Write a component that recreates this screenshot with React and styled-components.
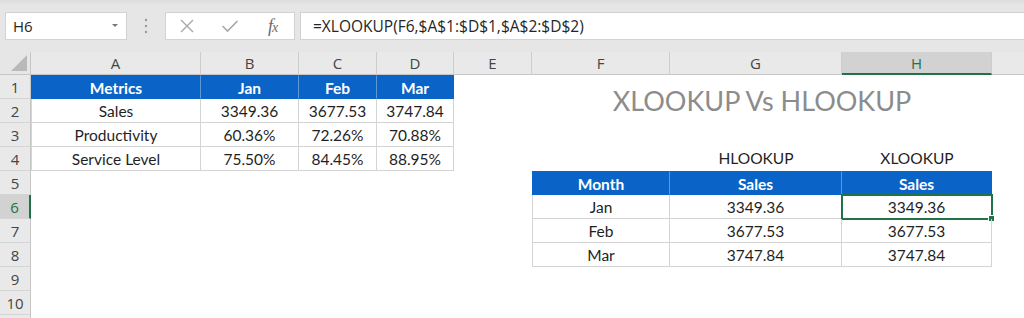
import React from "react";
import styled, { createGlobalStyle, css } from "styled-components";

const GlobalStyle = createGlobalStyle`
    html, body {
        margin: 0;
        padding: 0;
        background: #ffffff;
        overflow: hidden;
    }
`;

// widths in px, "label: false" for headers that run off the right edge
const COLS = [
    { key: "A", w: 170 },
    { key: "B", w: 98 },
    { key: "C", w: 78 },
    { key: "D", w: 77 },
    { key: "E", w: 78 },
    { key: "F", w: 138 },
    { key: "G", w: 172 },
    { key: "H", w: 150 },
    { key: "I", w: 100, label: false },
];
const ROWS = [1, 2, 3, 4, 5, 6, 7, 8, 9, 10, 11];
const LAST_VISIBLE_ROW = 10;

const ACTIVE_COL = "H";
const ACTIVE_ROW = 6;

// tables on the sheet, first row is the blue header
const TABLES = [
    {
        cols: ["A", "B", "C", "D"],
        firstRow: 1,
        rows: [
            ["Metrics", "Jan", "Feb", "Mar"],
            ["Sales", "3349.36", "3677.53", "3747.84"],
            ["Productivity", "60.36%", "72.26%", "70.88%"],
            ["Service Level", "75.50%", "84.45%", "88.95%"],
        ],
    },
    {
        cols: ["F", "G", "H"],
        firstRow: 5,
        rows: [
            ["Month", "Sales", "Sales"],
            ["Jan", "3349.36", "3349.36"],
            ["Feb", "3677.53", "3677.53"],
            ["Mar", "3747.84", "3747.84"],
        ],
    },
];

const LABELS = [
    { col: "G", row: 4, text: "HLOOKUP" },
    { col: "H", row: 4, text: "XLOOKUP" },
];

const colLine = (letter) => letter.charCodeAt(0) - 65 + 2;
const rowLine = (n) => n + 1;

const Window = styled.div`
    width: 1024px;
    height: 318px;
    overflow: hidden;
    background: #e6e6e6;
`;

/* ---------- formula bar ---------- */

const TopBar = styled.div`
    height: 52px;
    box-sizing: border-box;
    padding: 12px 0 12px 5px;
    display: flex;
    align-items: stretch;
    background: linear-gradient(#dcdcdc 0px, #e6e6e6 5px, #e6e6e6 100%);
    font-family: "Open Sans", "DejaVu Sans", sans-serif;
`;

const NameBox = styled.div`
    width: 122px;
    box-sizing: border-box;
    background: #fff;
    border: 1px solid #d2d2d2;
    display: flex;
    align-items: center;
    justify-content: space-between;
    padding: 0 8px 0 7px;
    font-size: 15px;
    color: #262626;
`;

const Caret = styled.span`
    width: 0;
    height: 0;
    border-left: 3px solid transparent;
    border-right: 3px solid transparent;
    border-top: 3px solid #777;
    margin-bottom: 2px;
`;

const Grip = styled.div`
    width: 38px;
    display: flex;
    align-items: center;
    justify-content: center;
`;

const FxBox = styled.div`
    width: 130px;
    box-sizing: border-box;
    background: #fff;
    border: 1px solid #d2d2d2;
    display: flex;
    align-items: center;
`;

const FxSlot = styled.div`
    width: 43px;
    display: flex;
    align-items: center;
    justify-content: center;
    color: #a6a6a6;
`;

const FxText = styled.span`
    font-family: "Liberation Serif", "DejaVu Serif", serif;
    font-style: italic;
    font-size: 18px;
    color: #6b6b6b;
    letter-spacing: -1px;
    & small {
        font-size: 14px;
    }
`;

const FormulaInput = styled.div`
    flex: 1;
    margin-left: 5px;
    background: #fff;
    border: 1px solid #d2d2d2;
    border-right: none;
    display: flex;
    align-items: center;
    padding-left: 12px;
    font-size: 15.5px;
    color: #262626;
    white-space: nowrap;
`;

/* ---------- sheet grid ---------- */

const Sheet = styled.div`
    display: grid;
    grid-template-columns: 31px ${COLS.map((c) => c.w + "px").join(" ")};
    grid-template-rows: 23px repeat(${ROWS.length}, 24px);
    background: #ffffff;
    font-family: "Lato", "Open Sans", sans-serif;
    font-size: 15.5px;
`;

const Corner = styled.div`
    grid-column: 1;
    grid-row: 1;
    background: #e6e6e6;
    border-right: 1px solid #c6c6c6;
    border-bottom: 1px solid #c6c6c6;
    box-sizing: border-box;
    display: flex;
    align-items: flex-end;
    justify-content: flex-end;
    padding: 0 3px 3px 0;
`;

const CornerMark = styled.span`
    width: 0;
    height: 0;
    border-left: 16px solid transparent;
    border-bottom: 16px solid #b9b9b9;
`;

const HeadBase = css`
    box-sizing: border-box;
    display: flex;
    align-items: center;
    justify-content: center;
    font-family: "Open Sans", "DejaVu Sans", sans-serif;
    font-size: 15px;
    color: #444;
    background: #e9e9e9;
`;

const ColHead = styled.div`
    ${HeadBase}
    grid-row: 1;
    grid-column: ${(p) => p.$col};
    border-right: 1px solid #cdcdcd;
    border-bottom: 1px solid #c6c6c6;
    ${(p) =>
        p.$active &&
        css`
            background: #d2d2d2;
            color: #217346;
            border-bottom: 2px solid #217346;
        `}
`;

const RowHead = styled.div`
    ${HeadBase}
    grid-column: 1;
    grid-row: ${(p) => p.$row};
    border-right: 1px solid #c6c6c6;
    border-bottom: 1px solid #d5d5d5;
    ${(p) =>
        p.$active &&
        css`
            background: #d2d2d2;
            color: #217346;
            border-right: 2px solid #217346;
        `}
`;

const Cell = styled.div`
    grid-column: ${(p) => p.$col};
    grid-row: ${(p) => p.$row};
    box-sizing: border-box;
    position: relative;
    display: flex;
    align-items: center;
    justify-content: center;
    padding-top: 1px;
    color: #1f1f1f;
    white-space: nowrap;
`;

const Label = styled(Cell)`
    padding: 0 0 3px;
`;

const TableCell = styled(Cell)`
    border-right: 1px solid #d4d4d4;
    border-bottom: 1px solid #d4d4d4;
    ${(p) => p.$left && "border-left: 1px solid #d4d4d4;"}
    ${(p) =>
        p.$head &&
        css`
            background: #0a64c8;
            color: #ffffff;
            font-weight: 700;
            border-color: #5f98d8;
            border-top: 1px solid #0a64c8;
            border-bottom-color: #0a64c8;
        `}
    ${(p) => p.$head && p.$left && "border-left-color: #0a64c8;"}
    ${(p) => p.$head && p.$last && "border-right-color: #0a64c8;"}
    ${(p) =>
        p.$selected &&
        css`
            outline: 2px solid #217346;
            outline-offset: -1px;
            &::after {
                content: "";
                position: absolute;
                right: -4px;
                bottom: -4px;
                width: 5px;
                height: 5px;
                background: #217346;
                border: 1px solid #fff;
            }
        `}
`;

const Title = styled.div`
    grid-column: ${colLine("F")} / ${colLine("I")};
    grid-row: ${rowLine(1)} / ${rowLine(3)};
    display: flex;
    align-items: center;
    justify-content: center;
    padding-top: 3px;
    font-size: 27px;
    color: #8c8c8c;
    white-space: nowrap;
    z-index: 1;
`;

const XIcon = () => (
    <svg width="16" height="16" viewBox="0 0 16 16">
        <path d="M2 2 L14 14 M14 2 L2 14" stroke="#a8a8a8" strokeWidth="1.4" fill="none" />
    </svg>
);

const CheckIcon = () => (
    <svg width="18" height="14" viewBox="0 0 18 14">
        <path d="M1.5 7 L6.5 12 L16.5 2" stroke="#a8a8a8" strokeWidth="1.6" fill="none" />
    </svg>
);

const GripIcon = () => (
    <svg width="4" height="16" viewBox="0 0 4 16">
        <circle cx="2" cy="2" r="1.2" fill="#9a9a9a" />
        <circle cx="2" cy="8" r="1.2" fill="#9a9a9a" />
        <circle cx="2" cy="14" r="1.2" fill="#9a9a9a" />
    </svg>
);

const App = () => {
    const tableCells = [];
    TABLES.forEach((t, ti) =>
        t.rows.forEach((row, ri) =>
            row.forEach((text, ci) => {
                const col = t.cols[ci];
                const n = t.firstRow + ri;
                tableCells.push(
                    <TableCell
                        key={`${ti}-${ri}-${ci}`}
                        $col={colLine(col)}
                        $row={rowLine(n)}
                        $head={ri === 0}
                        $left={ci === 0}
                        $last={ci === row.length - 1}
                        $selected={col === ACTIVE_COL && n === ACTIVE_ROW}
                    >
                        {text}
                    </TableCell>
                );
            })
        )
    );

    return (
        <Window>
            <GlobalStyle />
            <TopBar>
                <NameBox>
                    <span>H6</span>
                    <Caret />
                </NameBox>
                <Grip>
                    <GripIcon />
                </Grip>
                <FxBox>
                    <FxSlot><XIcon /></FxSlot>
                    <FxSlot><CheckIcon /></FxSlot>
                    <FxSlot>
                        <FxText>f<small>x</small></FxText>
                    </FxSlot>
                </FxBox>
                <FormulaInput>=XLOOKUP(F6,$A$1:$D$1,$A$2:$D$2)</FormulaInput>
            </TopBar>
            <Sheet>
                <Corner>
                    <CornerMark />
                </Corner>
                {COLS.map((c) => (
                    <ColHead key={c.key} $col={colLine(c.key)} $active={c.key === ACTIVE_COL}>
                        {c.label === false ? "" : c.key}
                    </ColHead>
                ))}
                {ROWS.map((n) => (
                    <RowHead key={n} $row={rowLine(n)} $active={n === ACTIVE_ROW}>
                        {n <= LAST_VISIBLE_ROW ? n : ""}
                    </RowHead>
                ))}
                <Title>XLOOKUP Vs HLOOKUP</Title>
                {LABELS.map((l) => (
                    <Label key={l.text} $col={colLine(l.col)} $row={rowLine(l.row)}>
                        {l.text}
                    </Label>
                ))}
                {tableCells}
            </Sheet>
        </Window>
    );
};

export default App;
